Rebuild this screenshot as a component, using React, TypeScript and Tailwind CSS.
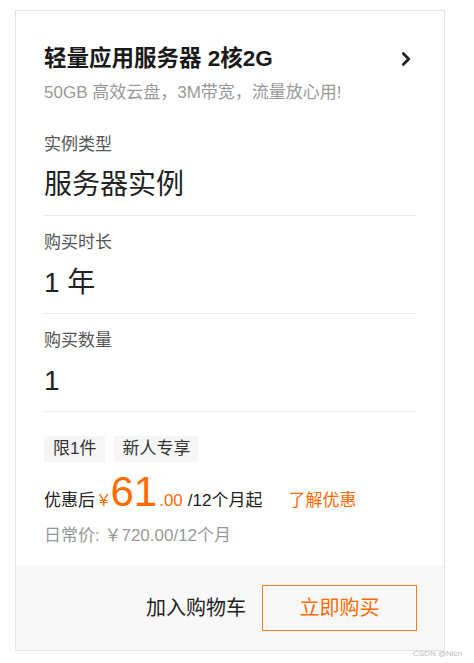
import { ChevronRight } from "lucide-react";

const font = { fontFamily: '"Liberation Sans", "Noto Sans CJK SC", sans-serif' };

type Field = { label: string; value: string };

const fields: Field[] = [
  { label: "实例类型", value: "服务器实例" },
  { label: "购买时长", value: "1 年" },
  { label: "购买数量", value: "1" },
];

export default function App() {
  return (
    <div style={font} className="relative w-[474px] h-[663px] bg-white pt-[10px] pl-[15px]">
      <div className="w-[430px] border border-[#e4e4e4]">
        <div className="pt-[34px] pl-[28px] pr-[27px] pb-[18px]">
          <div className="flex items-center justify-between">
            <h1 className="text-[22.5px] leading-[28px] font-bold text-[#1a1a1a]">轻量应用服务器 2核2G</h1>
            <ChevronRight size={22} strokeWidth={3} className="text-[#222]" />
          </div>
          <p className="mt-[8px] text-[17px] leading-[24px] text-[#999]">50GB 高效云盘，3M带宽，流量放心用!</p>

          <div className="mt-[13px]">
            {fields.map((f) => (
              <div key={f.label} className="pt-[15px] pb-[12px] border-b border-[#ededed]">
                <div className="text-[17px] leading-[24px] text-[#555]">{f.label}</div>
                <div className="mt-[10px] text-[28px] leading-[36px] text-[#222]">{f.value}</div>
              </div>
            ))}
          </div>

          <div className="mt-[24px] flex gap-[9px]">
            <span className="h-[26px] px-[9px] bg-[#f6f6f6] text-[17px] leading-[26px] text-[#333]">限1件</span>
            <span className="h-[26px] px-[8px] bg-[#f6f6f6] text-[17px] leading-[26px] text-[#333]">新人专享</span>
          </div>

          <div className="mt-[10px] h-[40px] flex items-baseline text-[17px] text-[#222]">
            <span>优惠后</span>
            <span className="ml-[4px] text-[#ff6a00]">¥</span>
            <span className="ml-[2px] text-[42px] leading-[40px] text-[#ff6a00]">61</span>
            <span className="ml-[2px] text-[#ff6a00]">.00</span>
            <span className="ml-[5px]">/12个月起</span>
            <span className="ml-[26px] text-[#ff6a00]">了解优惠</span>
          </div>

          <div className="mt-[12px] text-[17px] leading-[24px] text-[#999]">日常价: ￥720.00/12个月</div>
        </div>

        <div className="bg-[#f8f8f8] py-[19px] pr-[27px] flex items-center justify-end gap-[16px]">
          <span className="text-[20px] text-[#222]">加入购物车</span>
          <button className="w-[155px] h-[46px] border border-[#ff7a26] text-[20px] text-[#ff6a00] bg-transparent">
            立即购买
          </button>
        </div>
      </div>
      <span className="absolute right-[12px] bottom-[4px] text-[8px] leading-[10px] text-[#bbb]">CSDN @Nicn</span>
    </div>
  );
}
